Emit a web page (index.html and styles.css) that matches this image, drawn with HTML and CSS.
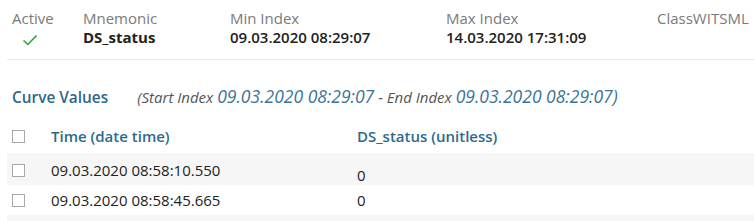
FILE: index.html
```html
<!DOCTYPE html>
<html>
<head>
<meta charset="utf-8">
<link rel="stylesheet" href="styles.css">
</head>
<body>
<div class="page">
  <div class="summary">
    <div class="field f-active">
      <div class="label">Active</div>
      <div class="check"><svg width="16" height="12" viewBox="0 0 16 12"><path d="M1.5 6.5 L5.8 10.5 L14.5 1.5" fill="none" stroke="#2f9e3a" stroke-width="1.6"/></svg></div>
    </div>
    <div class="field f-mnem">
      <div class="label">Mnemonic</div>
      <div class="value bold">DS_status</div>
    </div>
    <div class="field f-min">
      <div class="label">Min Index</div>
      <div class="value">09.03.2020 08:29:07</div>
    </div>
    <div class="field f-max">
      <div class="label">Max Index</div>
      <div class="value">14.03.2020 17:31:09</div>
    </div>
    <div class="field f-class">
      <div class="label">ClassWITSML</div>
    </div>
  </div>

  <div class="title">
    <span class="t-main">Curve Values</span>
    <span class="t-range">(Start Index <span class="t-date">09.03.2020 08:29:07</span> - End Index <span class="t-date">09.03.2020 08:29:07)</span></span>
  </div>

  <div class="table">
    <div class="row head">
      <div class="cb"><span class="box"></span></div>
      <div class="c1">Time (date time)</div>
      <div class="c2">DS_status (unitless)</div>
    </div>
    <div class="row odd">
      <div class="cb"><span class="box"></span></div>
      <div class="c1">09.03.2020 08:58:10.550</div>
      <div class="c2 low">0</div>
    </div>
    <div class="row">
      <div class="cb"><span class="box"></span></div>
      <div class="c1">09.03.2020 08:58:45.665</div>
      <div class="c2">0</div>
    </div>
    <div class="row odd tail"></div>
  </div>
</div>
</body>
</html>
```

FILE: styles.css
```css
html, body {
  margin: 0;
  padding: 0;
  background: #fff;
  overflow: hidden;
}
body {
  font-family: "Open Sans", "Noto Sans", sans-serif;
  color: #222;
}
.page {
  padding: 0 0 0 7px;
  width: 747px;
  height: 221px;
  overflow: hidden;
}
.summary {
  display: flex;
  height: 60px;
  border-bottom: 1px solid #ececec;
  box-sizing: border-box;
}
.field {
  padding-top: 8px;
}
.label {
  font-size: 15px;
  line-height: 20px;
  color: #7a7a7a;
}
.value {
  font-size: 15px;
  line-height: 18px;
  color: #222;
  font-weight: 600;
}
.value.bold { font-weight: 700; }
.f-active { width: 71px; padding-left: 5px; }
.check { padding-left: 10px; padding-top: 1px; height: 12px; }
.f-mnem { width: 147px; }
.f-min { width: 216px; }
.f-max { width: 211px; }

.title {
  margin-top: 24px;
  padding-left: 5px;
  height: 23px;
  display: flex;
  align-items: baseline;
  white-space: nowrap;
}
.t-main {
  font-size: 15.4px;
  font-weight: 600;
  color: #2c6a8c;
  margin-right: 29px;
}
.t-range {
  font-size: 15px;
  font-style: italic;
  color: #555;
}
.t-date {
  font-size: 17.5px;
  color: #3b7396;
}

.table {
  margin-top: 15px;
}
.row {
  display: flex;
  align-items: center;
  height: 30px;
  font-size: 15px;
  color: #222;
}
.row.head {
  box-sizing: border-box;
  height: 33px;
  padding-bottom: 4px;
  border-bottom: 1px solid #f0f0f0;
  color: #2c6a8c;
  font-weight: 600;
}
.row.odd { background: #f6f6f6; }
.cb {
  width: 39px;
  padding-left: 5px;
  display: flex;
  align-items: center;
}
.box {
  display: block;
  width: 11px;
  height: 11px;
  border: 1px solid #a8a8a8;
  background: #fff;
}
.c1 { width: 306px; }
.c2.low { padding-top: 10px; }
```
